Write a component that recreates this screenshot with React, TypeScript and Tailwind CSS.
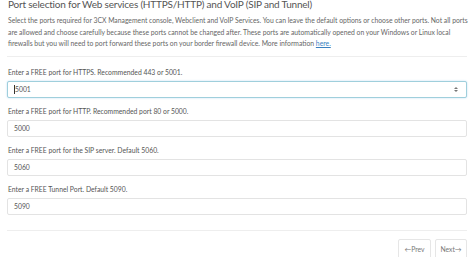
import React from "react";

const fields = [
  { label: "Enter a FREE port for HTTPS. Recommended 443 or 5001.", value: "5001", focused: true },
  { label: "Enter a FREE port for HTTP. Recommended port 80 or 5000.", value: "5000" },
  { label: "Enter a FREE port for the SIP server. Default 5060.", value: "5060" },
  { label: "Enter a FREE Tunnel Port. Default 5090.", value: "5090" },
];

export default function App() {
  return (
    <div
      className="w-[474px] h-[257px] overflow-hidden bg-white text-[#555]"
      style={{ fontFamily: "Lato, 'Open Sans', sans-serif" }}
    >
      <div className="px-[7px] -mt-[3px]">
        <h1 className="text-[10px] leading-[14px] tracking-[-0.2px] text-[#555] pl-[1px] whitespace-nowrap">
          Port selection for Web services (HTTPS/HTTP) and VoIP (SIP and Tunnel)
        </h1>
        <p className="mt-[4px] text-[6.8px] leading-[11.5px] text-[#666] pl-[1px] whitespace-nowrap">
          Select the ports required for 3CX Management console, Webclient and VoIP Services. You can leave the default
          options or choose other ports. Not all ports
          <br />
          are allowed and choose carefully because these ports cannot be changed after. These ports are automatically
          opened on your Windows or Linux local
          <br />
          firewalls but you will need to port forward these ports on your border firewall device. More information{" "}
          <a className="text-[#3a7fbf] underline">here.</a>
        </p>
        <div className="mt-[6px] border-t border-[#eee]" />

        <div className="pt-[10px]">
          {fields.map((f, i) => (
            <div key={i} className={i === 0 ? "" : "mt-[8px]"}>
              <div className="text-[6.8px] leading-[10px] text-[#555] pl-[1px] whitespace-nowrap">{f.label}</div>
              <div
                className={
                  "mt-[4px] h-[17px] flex items-center rounded-[2px] border bg-white pl-[6px] pr-[8px] text-[6.8px] text-[#555] " +
                  (f.focused
                    ? "border-[#9fcfdc] shadow-[0_0_2px_rgba(102,175,233,0.45)]"
                    : "border-[#e3e3e3]")
                }
              >
                {f.focused && <span className="w-[1px] h-[9px] bg-[#333]" />}
                <span className="flex-1">{f.value}</span>
                {f.focused && (
                  <span className="flex flex-col gap-[1px] items-center">
                    <span className="w-0 h-0 border-x-[2px] border-x-transparent border-b-[2px] border-b-[#777]" />
                    <span className="w-0 h-0 border-x-[2px] border-x-transparent border-t-[2px] border-t-[#777]" />
                  </span>
                )}
              </div>
            </div>
          ))}
        </div>

        <div className="mt-[15px] border-t border-[#eee]" />
        <div className="flex justify-end gap-[4px] pt-[8px]">
          <button className="h-[22px] w-[33px] border border-[#e6e6e6] rounded-[2px] text-[6.8px] text-[#777]">
            ←Prev
          </button>
          <button className="h-[22px] w-[32px] border border-[#e6e6e6] rounded-[2px] text-[6.8px] text-[#777]">
            Next→
          </button>
        </div>
      </div>
    </div>
  );
}
